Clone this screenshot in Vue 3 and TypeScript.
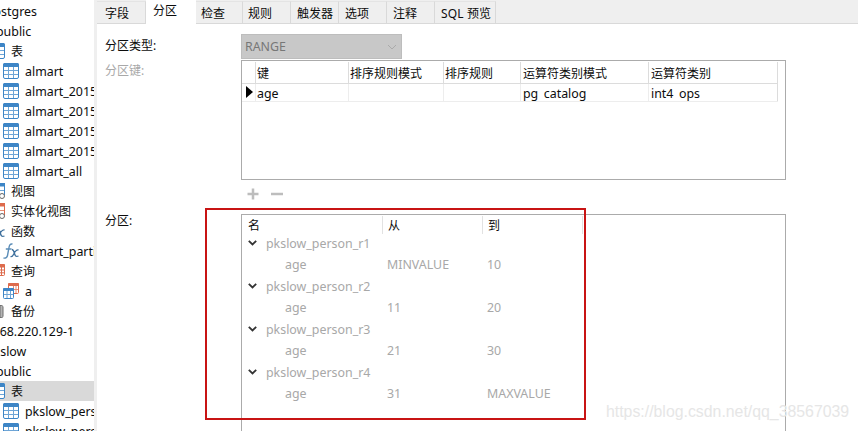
<script setup lang="ts">
interface TreeRow { text: string; level: string; icon?: string; selected?: boolean }
const tree: TreeRow[] = [
  { text: 'postgres', level: 'db' },
  { text: 'public', level: 'schema' },
  { text: '表', level: 'group', icon: 'table' },
  { text: 'almart', level: 'item', icon: 'table' },
  { text: 'almart_2015', level: 'item', icon: 'table' },
  { text: 'almart_2015', level: 'item', icon: 'table' },
  { text: 'almart_2015', level: 'item', icon: 'table' },
  { text: 'almart_2015', level: 'item', icon: 'table' },
  { text: 'almart_all', level: 'item', icon: 'table' },
  { text: '视图', level: 'group', icon: 'view' },
  { text: '实体化视图', level: 'group', icon: 'mview' },
  { text: '函数', level: 'group', icon: 'fx' },
  { text: 'almart_partition', level: 'item', icon: 'fx' },
  { text: '查询', level: 'group', icon: 'query' },
  { text: 'a', level: 'item', icon: 'querytable' },
  { text: '备份', level: 'group', icon: 'backup' },
  { text: '192.168.220.129-1', level: 'conn' },
  { text: 'pkslow', level: 'db' },
  { text: 'public', level: 'schema' },
  { text: '表', level: 'group', icon: 'table', selected: true },
  { text: 'pkslow_person', level: 'item', icon: 'table' },
  { text: 'pkslow_person', level: 'item', icon: 'table' },
]
const isCjk = (s: string): boolean => /[^\x00-\x7f]/.test(s)
const tabs = ['字段', '分区', '检查', '规则', '触发器', '选项', '注释', 'SQL 预览']
const keyCols = ['键', '排序规则模式', '排序规则', '运算符类别模式', '运算符类别']
const keyRow = [['age'], [], [], ['pg', 'catalog'], ['int4', 'ops']]
const parts = [
  { name: 'pkslow_person_r1', from: 'MINVALUE', to: '10' },
  { name: 'pkslow_person_r2', from: '11', to: '20' },
  { name: 'pkslow_person_r3', from: '21', to: '30' },
  { name: 'pkslow_person_r4', from: '31', to: 'MAXVALUE' },
]
</script>

<template>
  <div class="app">
    <aside class="side">
      <div v-for="(r, i) in tree" :key="i" class="trow" :class="['lv-' + r.level, { sel: r.selected }]">
        <svg v-if="r.icon" class="ic" width="16" height="16" viewBox="0 0 16 16">
          <g v-if="r.icon === 'table'">
            <rect x="0.5" y="0.5" width="15" height="15" rx="1.5" fill="#fff" stroke="#3d85c6" />
            <rect x="0" y="0" width="16" height="4" rx="1.5" fill="#3d85c6" />
            <path d="M5.5 4v11M10.5 4v11M1 7.5h14M1 11.5h14" stroke="#6ea5d6" fill="none" />
          </g>
          <g v-else-if="r.icon === 'view'">
            <rect x="0.5" y="0.5" width="15" height="11" fill="#fff" stroke="#3d85c6" />
            <rect x="0" y="0" width="16" height="3.5" fill="#3d85c6" />
            <path d="M5.5 3v8M10.5 3v8M1 7.5h14" stroke="#6ea5d6" fill="none" />
            <circle cx="13" cy="13" r="2.5" fill="#fff" stroke="#666" />
          </g>
          <g v-else-if="r.icon === 'mview'">
            <rect x="0.5" y="0.5" width="15" height="11" fill="#fff" stroke="#dd6b4d" />
            <rect x="0" y="0" width="16" height="3.5" fill="#dd6b4d" />
            <path d="M5.5 3v8M10.5 3v8M1 7.5h14" stroke="#e58d75" fill="none" />
            <circle cx="13" cy="13" r="2.5" fill="#fff" stroke="#666" />
          </g>
          <g v-else-if="r.icon === 'fx'">
            <path d="M9.5 1C7 0.500 6.300 2.500 5.800 5.500L4.500 12.500C4.100 14.500 2.700 15.500 0.500 15M2.800 6H8.500" fill="none" stroke="#5b8db8" stroke-width="1.400" />
            <path d="M8.800 6.500C10.500 6.500 10.800 8 11.500 10.500C12 12.800 12.800 14 15.500 13M15.500 7C13.500 6.500 11.500 9.500 10.500 11.500C9.800 13 8.800 14 7.500 13.500" fill="none" stroke="#3d6f9c" stroke-width="1.300" />
          </g>
          <g v-else-if="r.icon === 'query'">
            <rect x="0.500" y="1.500" width="15" height="11" rx="1" fill="#fff" stroke="#dd6b4d" />
            <rect x="0" y="1" width="16" height="3.500" rx="1" fill="#dd6b4d" />
            <path d="M12.500 4v8M1 7h14M1 9.800h14" stroke="#dd6b4d" fill="none" />
          </g>
          <g v-else-if="r.icon === 'querytable'">
            <rect x="5.500" y="0.500" width="10" height="10" rx="1" fill="#fff" stroke="#dd6b4d" />
            <rect x="5" y="0" width="11" height="3" rx="1" fill="#dd6b4d" />
            <path d="M10.500 3v7M13 3v7M6 6.500h9" stroke="#e58d75" fill="none" />
            <rect x="0.500" y="5.500" width="10" height="10" rx="1" fill="#fff" stroke="#3d85c6" />
            <rect x="0" y="5" width="11" height="3" rx="1" fill="#3d85c6" />
            <path d="M4 8v7M7.500 8v7M1 11.500h9" stroke="#6ea5d6" fill="none" />
          </g>
          <g v-else>
            <rect x="0" y="2" width="14.500" height="13" rx="2.500" fill="#6f6f6f" />
            <rect x="11.500" y="3" width="2" height="11" fill="#b5b5b5" />
          </g>
        </svg>
        <span class="ttext" :class="{ cjk: isCjk(r.text) }">{{ r.text }}</span>
      </div>
    </aside>
    <div class="split"></div>
    <main class="main">
      <nav class="tabs">
        <div v-for="(t, i) in tabs" :key="t" class="tab" :class="[{ active: i === 1 }, 't' + i]">{{ t }}</div>
      </nav>
      <section class="form">
        <div class="label rowlabel cjk">分区类型:</div>
        <div class="select">
          <span>RANGE</span>
          <svg width="10" height="6" viewBox="0 0 10 6"><path d="M1 1l4 4 4-4" fill="none" stroke="#aaa" /></svg>
        </div>
        <div class="label muted keylabel cjk">分区键:</div>
        <div class="keybox">
          <div class="khead cjk">
            <div class="kgutter"></div>
            <div v-for="(c, i) in keyCols" :key="c" class="kcell" :class="'c' + i">{{ c }}</div>
          </div>
          <div class="krow">
            <div class="kgutter"><i class="arrow"></i></div>
            <div v-for="(c, i) in keyRow" :key="i" class="kcell" :class="'c' + i">
              <span>{{ c[0] }}<template v-if="c[1]"><span class="us">_</span>{{ c[1] }}</template></span>
            </div>
          </div>
        </div>
        <div></div>
        <div class="tools">
          <svg width="12" height="12" viewBox="0 0 12 12"><path d="M6 0.500v11M0.500 6h11" stroke="#bdbdbd" stroke-width="2.500" /></svg>
          <svg width="12" height="12" viewBox="0 0 12 12"><path d="M0 6h12" stroke="#bdbdbd" stroke-width="2.500" /></svg>
        </div>
        <div class="label partlabel cjk">分区:</div>
        <div class="partbox">
          <div class="phead cjk">
            <div class="pc p0">名</div>
            <div class="pc p1">从</div>
            <div class="pc p2">到</div>
          </div>
          <template v-for="p in parts" :key="p.name">
            <div class="prow">
              <div class="pc p0 pname">
                <svg width="9" height="6" viewBox="0 0 9 6"><path d="M0.800 0.800l3.700 3.700 3.700-3.700" fill="none" stroke="#333" stroke-width="1.800" /></svg>
                <span>{{ p.name }}</span>
              </div>
            </div>
            <div class="prow">
              <div class="pc p0 page">age</div>
              <div class="pc p1 pval">{{ p.from }}</div>
              <div class="pc p2 pval">{{ p.to }}</div>
            </div>
          </template>
        </div>
      </section>
    </main>
    <div class="redbox"></div>
    <div class="mark">https://blog.csdn.net/qq_38567039</div>
  </div>
</template>

<style>
html, body { margin: 0; background: #fff; overflow: hidden; }
</style>

<style scoped>
.app {
  width: 858px;
  height: 431px;
  display: flex;
  overflow: hidden;
  position: relative;
  background: #fff;
  color: #0c0c0c;
  font-family: "Noto Sans", "Noto Sans CJK SC", sans-serif;
  font-size: 12.4px;
}
.cjk { font-size: 12px; }
.side { width: 94px; padding-top: 1px; overflow: hidden; flex: none; }
.trow {
  height: 20px;
  display: flex;
  align-items: center;
  gap: 6px;
  white-space: nowrap;
}
.lv-conn { margin-left: -32px; }
.lv-db { margin-left: -14px; }
.lv-schema { margin-left: -4px; }
.lv-group { margin-left: -11px; }
.lv-item { margin-left: 3px; }
.sel { background: #d9d9d9; }
.ic { flex: none; }
.split { width: 3px; flex: none; background: #efefef; }
.main { flex: 1; min-width: 0; display: flex; flex-direction: column; }
.tabs {
  height: 23px;
  display: flex;
  background: #efefef;
  border-bottom: 1px solid #d9d9d9;
  flex: none;
  font-size: 12px;
}
.tab {
  width: 48px;
  margin-top: 1px;
  height: 22px;
  box-sizing: border-box;
  border-right: 1px solid #d9d9d9;
  border-top: 1px solid #e4e4e4;
  display: flex;
  align-items: center;
  padding-left: 6px;
}
.t0 { width: 49px; padding-left: 8px; }
.t1 { width: 50px; padding-left: 7px; }
.t2 { width: 47px; padding-left: 5px; }
.t3 { padding-left: 5px; }
.t7 { width: 61px; letter-spacing: 0.15px; }
.tab.active {
  margin-top: 0;
  height: 24px;
  background: #fff;
  border: none;
  padding-bottom: 5px;
}
.form {
  display: grid;
  grid-template-columns: 144px 545px;
  grid-template-rows: 25px 120px 35px auto;
  padding: 10px 0 0 0;
}
.label { padding-left: 8px; }
.rowlabel { padding-top: 2px; }
.muted { color: #a8a8a8; }
.keylabel { padding-top: 2px; }
.partlabel { margin-top: -3px; }
.select {
  width: 161px;
  height: 25px;
  box-sizing: border-box;
  background: #c8c8c8;
  border: 1px solid #bdbdbd;
  color: #777;
  padding: 0 4px 0 3px;
  display: flex;
  align-items: center;
  justify-content: space-between;
}
.keybox {
  border: 1px solid #ababab;
  box-sizing: border-box;
  height: 120px;
  padding-top: 1px;
  margin-top: 1px;
}
.khead { height: 21px; display: flex; border-bottom: 1px solid #dcdcdc; width: 536px; }
.krow { height: 17px; display: flex; border-bottom: 1px solid #ededed; width: 536px; }
.kgutter { width: 13px; flex: none; position: relative; height: 100%; }
.kcell {
  box-sizing: border-box;
  border-left: 1px solid #dcdcdc;
  padding-left: 1px;
  height: 100%;
  display: flex;
  align-items: center;
  white-space: nowrap;
  overflow: hidden;
}
.krow .kcell {
  border-left-color: #ededed;
  align-items: flex-start;
  padding-top: 1px;
  line-height: 17px;
}
.us { color: transparent; }
.c0 { width: 93px; }
.c1 { width: 95px; }
.c2 { width: 77px; }
.c3 { width: 128px; padding-left: 2px; }
.c4 { width: 130px; padding-left: 2px; border-right: 1px solid #dcdcdc; }
.arrow {
  position: absolute;
  left: 4px;
  top: 2px;
  border-left: 7px solid #000;
  border-top: 6px solid transparent;
  border-bottom: 6px solid transparent;
}
.tools { display: flex; align-items: center; gap: 12px; padding: 0 0 6px 6px; }
.partbox {
  height: 240px;
  box-sizing: border-box;
  border: 1px solid #ababab;
  border-bottom: none;
}
.phead { display: flex; height: 17.5px; padding-top: 1px; margin-bottom: -1px; }
.prow { display: flex; height: 21.5px; }
.pc { box-sizing: border-box; display: flex; align-items: center; white-space: nowrap; }
.p0 { width: 141px; padding-left: 6px; }
.p1 { width: 100px; padding-left: 4px; }
.p2 { width: 100px; padding-left: 4px; }
.phead .pc { border-right: 1px solid #e2e2e2; height: 100%; }
.phead .p1, .phead .p2 { padding-left: 5px; }
.pname { color: #a8a8a8; gap: 9px; }
.page { color: #a8a8a8; padding-left: 43px; }
.pval { color: #a8a8a8; }
.redbox {
  position: absolute;
  left: 205px;
  top: 208px;
  width: 381px;
  height: 212px;
  box-sizing: border-box;
  border: 2px solid #c81414;
  pointer-events: none;
}
.mark {
  position: absolute;
  left: 606px;
  top: 403px;
  font-family: "Liberation Sans", sans-serif;
  font-size: 15.850px;
  color: #e6e6e6;
  white-space: nowrap;
}
</style>
